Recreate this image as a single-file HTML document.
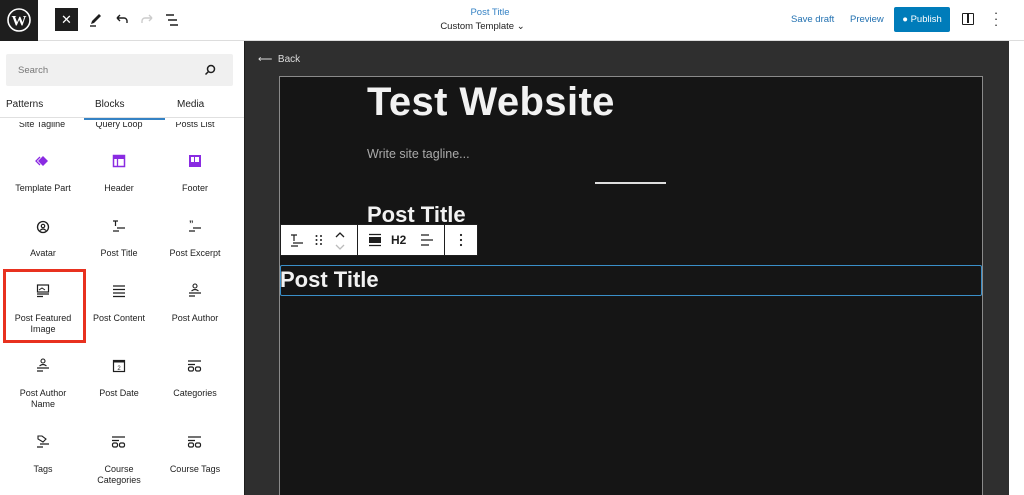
<!DOCTYPE html>
<html style="width:1024px;height:495px;overflow:hidden"><head><style>
*{margin:0;padding:0;box-sizing:border-box}
body{width:1024px;height:495px;overflow:hidden;font-family:"Liberation Sans",sans-serif;background:#fff;position:relative}
.a{position:absolute}
.lbl{position:absolute;width:80px;text-align:center;font-size:9px;color:#1e1e1e;line-height:11px}
.ic{position:absolute}
</style></head><body>
<!-- header -->
<div class="a" style="left:0;top:0;width:1024px;height:41px;background:#fff;border-bottom:1px solid #ddd"></div>
<div class="a" style="left:0;top:0;width:38px;height:41px;background:#1e1e1e"></div>
<svg class="a" style="left:5px;top:6px" width="28" height="28" viewBox="0 0 28 28"><circle cx="14" cy="14" r="11" fill="none" stroke="#fff" stroke-width="1.6"/><text x="14" y="19.5" text-anchor="middle" font-family="Liberation Serif" font-weight="bold" font-size="15" fill="#fff">W</text></svg>
<div class="a" style="left:55px;top:8px;width:23px;height:23px;background:#1e1e1e;color:#fff;font-size:13px;text-align:center;line-height:23px">✕</div>
<svg class="a" style="left:86px;top:10px" width="20" height="20" viewBox="0 0 20 20"><path d="M13 4l2 2-7 7-3 1 1-3z" fill="#1e1e1e"/><path d="M4 16h6" stroke="#1e1e1e" stroke-width="1.4"/></svg>
<svg class="a" style="left:112px;top:10px" width="20" height="20" viewBox="0 0 20 20"><path d="M5 8h7a3 3 0 0 1 3 3v2M5 8l3-3M5 8l3 3" fill="none" stroke="#1e1e1e" stroke-width="1.4"/></svg>
<svg class="a" style="left:137px;top:10px" width="20" height="20" viewBox="0 0 20 20"><path d="M15 8H8a3 3 0 0 0-3 3v2M15 8l-3-3M15 8l-3 3" fill="none" stroke="#ccc" stroke-width="1.4"/></svg>
<svg class="a" style="left:162px;top:10px" width="20" height="20" viewBox="0 0 20 20"><path d="M4 5h8M6 10h9M8 15h8" stroke="#1e1e1e" stroke-width="1.4"/></svg>
<div class="a" style="left:420px;top:7px;width:140px;text-align:center;font-size:9.5px;color:#3582c4">Post Title</div>
<div class="a" style="left:420px;top:21px;width:125px;text-align:center;font-size:9.5px;color:#1e1e1e">Custom Template ⌄</div>
<div class="a" style="left:791px;top:14px;font-size:9.5px;color:#2271b1">Save draft</div>
<div class="a" style="left:850px;top:14px;font-size:9.5px;color:#2271b1">Preview</div>
<div class="a" style="left:894px;top:7px;width:56px;height:25px;background:#007cba;border-radius:2px;color:#fff;font-size:9.5px;line-height:25px;text-align:center">● Publish</div>
<div class="a" style="left:962px;top:13px;width:12px;height:12px;border:1.5px solid #1e1e1e;border-radius:1px"><div style="position:absolute;left:4px;top:0;width:1.5px;height:9px;background:#1e1e1e"></div></div>
<div class="a" style="left:993px;top:10px;font-size:13px;color:#1e1e1e;line-height:6px;width:6px;text-align:center">·<br>·<br>·</div>
<!-- sidebar -->
<div class="a" style="left:6px;top:54px;width:227px;height:32px;background:#f0f0f0;border-radius:2px"></div>
<div class="a" style="left:18px;top:65px;font-size:9.5px;color:#777">Search</div>
<svg class="a" style="left:203px;top:63px" width="14" height="14" viewBox="0 0 14 14"><circle cx="8" cy="6" r="3.5" fill="none" stroke="#1e1e1e" stroke-width="1.5"/><path d="M5.5 8.5L2.5 11.5" stroke="#1e1e1e" stroke-width="1.5"/></svg>
<div class="a" style="left:6px;top:99px;font-size:10px;color:#1e1e1e">Patterns</div>
<div class="a" style="left:95px;top:99px;font-size:10px;color:#1e1e1e">Blocks</div>
<div class="a" style="left:177px;top:99px;font-size:10px;color:#1e1e1e">Media</div>
<div class="a" style="left:0;top:117px;width:244px;height:5px;background:#fff;z-index:2;border-top:1px solid #e0e0e0"></div>
<div class="a" style="left:84px;top:118px;width:81px;height:1.5px;background:#3582c4;z-index:3"></div>
<div class="lbl" style="left:2px;top:119px">Site Tagline</div>
<div class="lbl" style="left:79px;top:119px">Query Loop</div>
<div class="lbl" style="left:155px;top:119px">Posts List</div>
<!-- row1 -->
<svg class="ic" style="left:35px;top:154px" width="16" height="14" viewBox="0 0 16 14"><path d="M8 2l5 5-5 5-5-5z" fill="#8a2be2"/><path d="M5 3L1 7l4 4" fill="none" stroke="#8a2be2" stroke-width="1.3"/></svg>
<svg class="ic" style="left:112px;top:154px" width="14" height="14" viewBox="0 0 14 14"><rect x="1.5" y="1.5" width="11" height="11" fill="none" stroke="#8a2be2" stroke-width="1.5"/><rect x="1.5" y="1.5" width="11" height="3.5" fill="#8a2be2"/><path d="M5.5 5v7" stroke="#8a2be2" stroke-width="1.3"/></svg>
<svg class="ic" style="left:188px;top:154px" width="14" height="14" viewBox="0 0 14 14"><rect x="1" y="1" width="12" height="12" fill="#8a2be2"/><rect x="3" y="3" width="3" height="5" fill="#fff"/><rect x="7" y="3" width="4" height="5" fill="#fff"/></svg>
<div class="lbl" style="left:3px;top:183px">Template Part</div>
<div class="lbl" style="left:79px;top:183px">Header</div>
<div class="lbl" style="left:155px;top:183px">Footer</div>
<!-- row2 -->
<svg class="ic" style="left:36px;top:220px" width="14" height="14" viewBox="0 0 14 14"><circle cx="7" cy="7" r="5.5" fill="none" stroke="#1e1e1e" stroke-width="1.3"/><circle cx="7" cy="6" r="1.7" fill="none" stroke="#1e1e1e" stroke-width="1.2"/><path d="M4 10.5q3-3 6 0" fill="none" stroke="#1e1e1e" stroke-width="1.2"/></svg>
<svg class="ic" style="left:112px;top:219px" width="14" height="16" viewBox="0 0 14 16"><path d="M1 2h5M3.5 2v5M5 9h8M1 12h6" stroke="#1e1e1e" stroke-width="1.2"/></svg>
<svg class="ic" style="left:188px;top:219px" width="14" height="16" viewBox="0 0 14 16"><text x="1" y="8" font-size="9" font-weight="bold" fill="#1e1e1e">”</text><path d="M5 9h8M1 12h6" stroke="#1e1e1e" stroke-width="1.2"/></svg>
<div class="lbl" style="left:3px;top:248px">Avatar</div>
<div class="lbl" style="left:79px;top:248px">Post Title</div>
<div class="lbl" style="left:155px;top:248px">Post Excerpt</div>
<!-- row3 -->
<div class="a" style="left:3px;top:269px;width:83px;height:74px;border:3px solid #e8311f"></div>
<svg class="ic" style="left:36px;top:284px" width="14" height="14" viewBox="0 0 14 14"><rect x="1.5" y="1" width="11" height="7" fill="none" stroke="#1e1e1e" stroke-width="1.2"/><path d="M3 6l3-2 3 2" fill="none" stroke="#1e1e1e" stroke-width="1"/><path d="M1 10h12M1 12.5h6" stroke="#1e1e1e" stroke-width="1.2"/></svg>
<svg class="ic" style="left:112px;top:284px" width="14" height="14" viewBox="0 0 14 14"><path d="M1 2h12M1 5.5h12M1 9h12M1 12.5h12" stroke="#1e1e1e" stroke-width="1.2"/></svg>
<svg class="ic" style="left:188px;top:283px" width="14" height="16" viewBox="0 0 14 16"><circle cx="7" cy="3" r="2" fill="none" stroke="#1e1e1e" stroke-width="1.1"/><path d="M3.5 8q3.5-3 7 0" fill="none" stroke="#1e1e1e" stroke-width="1.1"/><path d="M1 10h12M1 13h6" stroke="#1e1e1e" stroke-width="1.2"/></svg>
<div class="lbl" style="left:3px;top:313px">Post Featured<br>Image</div>
<div class="lbl" style="left:79px;top:313px">Post Content</div>
<div class="lbl" style="left:155px;top:313px">Post Author</div>
<!-- row4 -->
<svg class="ic" style="left:36px;top:358px" width="14" height="16" viewBox="0 0 14 16"><circle cx="7" cy="3" r="2" fill="none" stroke="#1e1e1e" stroke-width="1.1"/><path d="M3.5 8q3.5-3 7 0" fill="none" stroke="#1e1e1e" stroke-width="1.1"/><path d="M1 10h12M1 13h6" stroke="#1e1e1e" stroke-width="1.2"/></svg>
<svg class="ic" style="left:112px;top:359px" width="14" height="14" viewBox="0 0 14 14"><rect x="1.5" y="1.5" width="11" height="11" fill="none" stroke="#1e1e1e" stroke-width="1.2"/><path d="M1.5 2.5h11" stroke="#1e1e1e" stroke-width="2"/><text x="7" y="11" text-anchor="middle" font-size="6" fill="#1e1e1e">2</text></svg>
<svg class="ic" style="left:187px;top:359px" width="16" height="14" viewBox="0 0 16 14"><path d="M1 2h13M1 5.5h7" stroke="#1e1e1e" stroke-width="1.2"/><rect x="1.5" y="8" width="5" height="4" rx="1.5" fill="none" stroke="#1e1e1e" stroke-width="1.2"/><rect x="8.5" y="8" width="5" height="4" rx="1.5" fill="none" stroke="#1e1e1e" stroke-width="1.2"/></svg>
<div class="lbl" style="left:3px;top:388px">Post Author<br>Name</div>
<div class="lbl" style="left:79px;top:388px">Post Date</div>
<div class="lbl" style="left:155px;top:388px">Categories</div>
<!-- row5 -->
<svg class="ic" style="left:36px;top:434px" width="14" height="16" viewBox="0 0 14 16"><path d="M2 2h4l4 3-3 3-5-3z" fill="none" stroke="#1e1e1e" stroke-width="1.1"/><path d="M4 10h9M1 13h6" stroke="#1e1e1e" stroke-width="1.2"/></svg>
<svg class="ic" style="left:111px;top:435px" width="16" height="14" viewBox="0 0 16 14"><path d="M1 2h13M1 5.5h7" stroke="#1e1e1e" stroke-width="1.2"/><rect x="1.5" y="8" width="5" height="4" rx="1.5" fill="none" stroke="#1e1e1e" stroke-width="1.2"/><rect x="8.5" y="8" width="5" height="4" rx="1.5" fill="none" stroke="#1e1e1e" stroke-width="1.2"/></svg>
<svg class="ic" style="left:187px;top:435px" width="16" height="14" viewBox="0 0 16 14"><path d="M1 2h13M1 5.5h7" stroke="#1e1e1e" stroke-width="1.2"/><rect x="1.5" y="8" width="5" height="4" rx="1.5" fill="none" stroke="#1e1e1e" stroke-width="1.2"/><rect x="8.5" y="8" width="5" height="4" rx="1.5" fill="none" stroke="#1e1e1e" stroke-width="1.2"/></svg>
<div class="lbl" style="left:3px;top:464px">Tags</div>
<div class="lbl" style="left:79px;top:464px">Course<br>Categories</div>
<div class="lbl" style="left:155px;top:464px">Course Tags</div>
<!-- canvas -->
<div class="a" style="left:244px;top:41px;width:765px;height:454px;background:#2f2f2f;border-left:1px solid #1e1e1e"></div>
<div class="a" style="left:258px;top:54px;font-size:10px;color:#ddd">⟵&nbsp; Back</div>
<div class="a" style="left:279px;top:76px;width:704px;height:419px;background:#151515;border:1px solid #8a8a8a;border-bottom:none"></div>
<div class="a" style="left:367px;top:80px;font-size:40px;font-weight:bold;color:#f2f2f2;letter-spacing:0.4px">Test Website</div>
<div class="a" style="left:367px;top:147px;font-size:12.5px;color:#aaa">Write site tagline...</div>
<div class="a" style="left:595px;top:182px;width:71px;height:1.5px;background:#ddd"></div>
<div class="a" style="left:367px;top:202px;font-size:22px;font-weight:bold;color:#f2f2f2">Post Title</div>
<!-- toolbar -->
<div class="a" style="left:280px;top:224px;width:198px;height:32px;background:#fff;border:1px solid #1e1e1e"></div>
<div class="a" style="left:357px;top:224px;width:1px;height:32px;background:#1e1e1e"></div>
<div class="a" style="left:444px;top:224px;width:1px;height:32px;background:#1e1e1e"></div>
<svg class="a" style="left:289px;top:232px" width="16" height="16" viewBox="0 0 16 16"><path d="M2 3h6M5 3v6M4 11h10M2 14h7" stroke="#1e1e1e" stroke-width="1.2"/></svg>
<svg class="a" style="left:313px;top:233px" width="12" height="14" viewBox="0 0 12 14"><g fill="#1e1e1e"><circle cx="3.5" cy="3" r="1"/><circle cx="8" cy="3" r="1"/><circle cx="3.5" cy="7" r="1"/><circle cx="8" cy="7" r="1"/><circle cx="3.5" cy="11" r="1"/><circle cx="8" cy="11" r="1"/></g></svg>
<svg class="a" style="left:334px;top:230px" width="12" height="22" viewBox="0 0 12 22"><path d="M2 7l4-4 4 4" fill="none" stroke="#1e1e1e" stroke-width="1.3"/><path d="M2 15l4 4 4-4" fill="none" stroke="#bbb" stroke-width="1.3"/></svg>
<svg class="a" style="left:367px;top:232px" width="16" height="16" viewBox="0 0 16 16"><path d="M2 2.5h12M2 13.5h12" stroke="#1e1e1e" stroke-width="1.3"/><rect x="2" y="5" width="12" height="6" fill="#1e1e1e"/></svg>
<div class="a" style="left:391px;top:233px;font-size:12px;font-weight:bold;color:#1e1e1e">H2</div>
<svg class="a" style="left:419px;top:232px" width="16" height="16" viewBox="0 0 16 16"><path d="M2 3h8M2 8h12M2 13h8" stroke="#1e1e1e" stroke-width="1.3"/></svg>
<svg class="a" style="left:455px;top:232px" width="12" height="16" viewBox="0 0 12 16"><g fill="#1e1e1e"><circle cx="6" cy="3" r="1.1"/><circle cx="6" cy="8" r="1.1"/><circle cx="6" cy="13" r="1.1"/></g></svg>
<div class="a" style="left:280px;top:265px;width:702px;height:31px;border:1px solid #3a8fc9;border-radius:2px"></div>
<div class="a" style="left:280px;top:267px;font-size:22px;font-weight:bold;color:#f2f2f2">Post Title</div>
</body></html>
